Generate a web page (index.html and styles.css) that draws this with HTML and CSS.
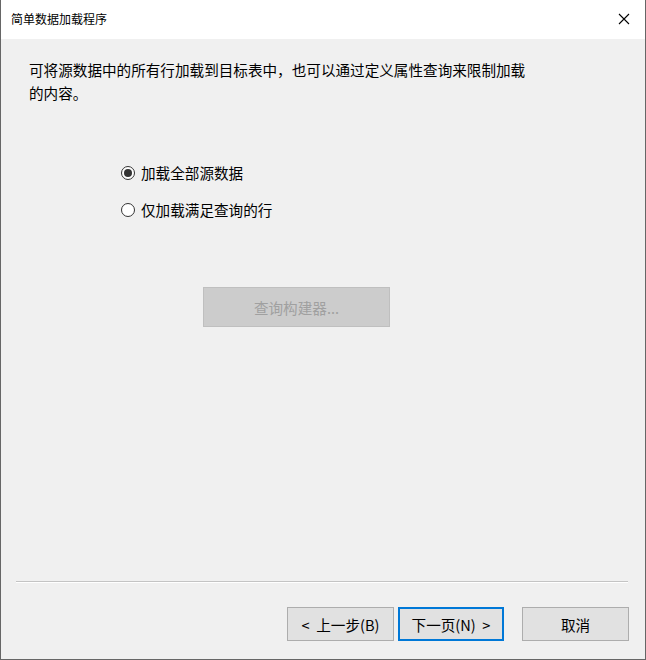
FILE: index.html
```html
<!DOCTYPE html>
<html>
<head>
<meta charset="utf-8">
<link rel="stylesheet" href="styles.css">
</head>
<body>
<div class="window">
  <div class="titlebar">
    <span class="title">简单数据加载程序</span>
    <span class="close"><svg width="12" height="12" viewBox="0 0 12 12"><path d="M1 1L11 11M11 1L1 11" stroke="#000" stroke-width="1.1" fill="none"/></svg></span>
  </div>
  <div class="content">
    <p class="desc">可将源数据中的所有行加载到目标表中，也可以通过定义属性查询来限制加载<br>的内容。</p>
    <div class="options">
      <label class="radio"><span class="dot checked"></span><span>加载全部源数据</span></label>
      <label class="radio"><span class="dot"></span><span>仅加载满足查询的行</span></label>
    </div>
    <div class="builder-row">
      <button class="builder" disabled>查询构建器...</button>
    </div>
    <div class="spacer"></div>
    <div class="separator"></div>
    <div class="footer">
      <button class="btn">&lt;&nbsp; 上一步(B)</button>
      <button class="btn primary">下一页(N)&nbsp; &gt;</button>
      <button class="btn cancel">取消</button>
    </div>
  </div>
</div>
</body>
</html>
```
FILE: styles.css
```css
html, body {
  margin: 0;
  padding: 0;
}
body {
  width: 646px;
  height: 660px;
  overflow: hidden;
  font-family: "Noto Sans CJK SC", "Microsoft YaHei", sans-serif;
  color: #000;
}
.window {
  box-sizing: border-box;
  width: 646px;
  height: 660px;
  border: 1px solid #666;
  border-top: none;
  display: flex;
  flex-direction: column;
  background: #f0f0f0;
}
.titlebar {
  height: 39px;
  background: #fff;
  display: flex;
  align-items: center;
  justify-content: space-between;
  padding: 0 15px 0 10px;
  flex: none;
}
.title {
  font-size: 12px;
  line-height: 16px;
  margin-top: -1px;
}
.close {
  display: flex;
  width: 12px;
  height: 12px;
  margin-top: -1px;
}
.content {
  flex: 1;
  display: flex;
  flex-direction: column;
}
.desc {
  margin: 19px 0 0 28px;
  font-size: 14.6px;
  line-height: 23px;
}
.options {
  margin: 57px 0 0 120px;
  display: flex;
  flex-direction: column;
  gap: 14px;
}
.radio {
  display: flex;
  align-items: center;
  font-size: 14.6px;
  line-height: 23px;
  gap: 6px;
}
.dot {
  box-sizing: border-box;
  width: 14px;
  height: 14px;
  border: 1px solid #333;
  border-radius: 50%;
  background: #fff;
  display: flex;
  align-items: center;
  justify-content: center;
}
.dot.checked::after {
  content: "";
  width: 8px;
  height: 8px;
  border-radius: 50%;
  background: #333;
}
.builder-row {
  margin: 66px 0 0 202px;
}
.builder {
  box-sizing: border-box;
  width: 187px;
  height: 40px;
  background: #cccccc;
  border: 1px solid #bfbfbf;
  color: #a0a0a0;
  font-family: inherit;
  font-size: 14.6px;
  padding: 0;
}
.spacer {
  flex: 1;
}
.separator {
  margin: 0 17px 0 15px;
  height: 1px;
  border-top: 1px solid #c4c4c4;
  background: #fff;
}
.footer {
  display: flex;
  justify-content: flex-end;
  padding: 24px 16px 18px 0;
}
.btn {
  box-sizing: border-box;
  width: 107px;
  height: 34px;
  background: #e1e1e1;
  border: 1px solid #adadad;
  font-family: inherit;
  font-size: 14.6px;
  color: #000;
  padding: 0;
  margin-left: 4px;
}
.btn.primary {
  border: 2px solid #0078d7;
  width: 106px;
}
.btn.cancel {
  margin-left: 18px;
}
```
